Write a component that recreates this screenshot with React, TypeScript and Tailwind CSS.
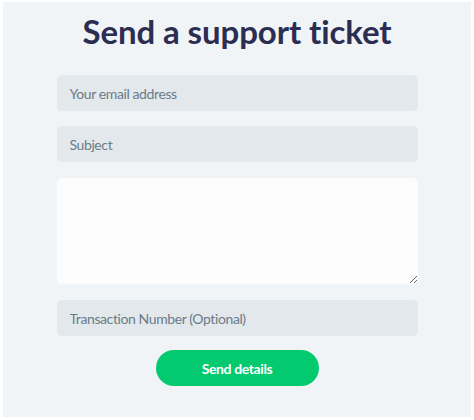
import React from "react";

export default function App() {
  const field =
    "w-full h-[36px] rounded-[5px] bg-[#e2e8ec] px-[13px] text-[14px] tracking-[-0.4px] text-[#33414e] placeholder:text-[#6c7b88] outline-none border-0";
  return (
    <div className="w-[474px] h-[420px] bg-white p-[2px_3px_3px_3px]" style={{ fontFamily: "Lato, 'Noto Sans', sans-serif" }}>
      <div className="h-full bg-[#f1f4f7] flex flex-col items-center pt-[9px]">
        <h1 className="text-[33px] leading-[40px] font-bold text-[#2b2e52] tracking-[-0.1px]">
          Send a support ticket
        </h1>
        <form className="w-[361px] flex flex-col mt-[24px]" onSubmit={(e) => e.preventDefault()}>
          <input className={field} placeholder="Your email address" />
          <input className={`${field} mt-[15px]`} placeholder="Subject" />
          <textarea className="mt-[16px] w-full h-[106px] rounded-[5px] bg-[#fcfcfc] px-[13px] py-[8px] text-[14px] outline-none border-0 resize-y" />
          <input className={`${field} mt-[16px]`} placeholder="Transaction Number (Optional)" />
          <button
            type="submit"
            className="self-center mt-[14px] w-[163px] h-[36px] rounded-full bg-[#03c96f] text-white font-bold text-[14px] tracking-[-0.4px]"
          >
            Send details
          </button>
        </form>
      </div>
    </div>
  );
}
